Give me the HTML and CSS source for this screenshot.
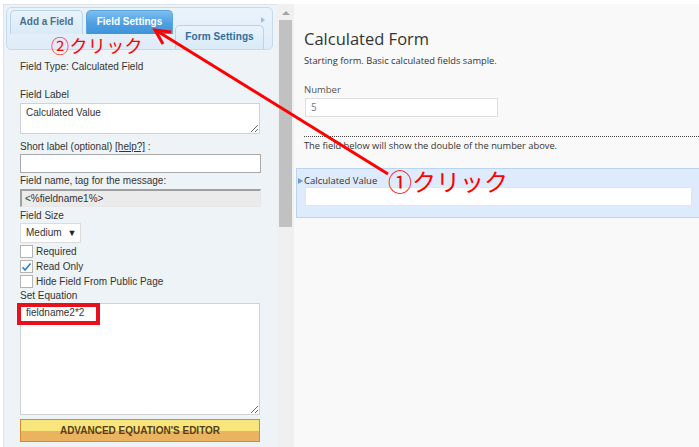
FILE: index.html
```html
<!doctype html>
<html lang="ja">
<head>
	<meta charset="UTF-8">
	<title>Calculated Form</title>
	<link rel="stylesheet" href="styles.css">
</head>
<body>
	<div class="app">
		<div class="sidebar">
			<div class="tabs">
				<span class="tab tab-first">Add a Field</span>
				<span class="tab tab-active">Field Settings</span>
				<span class="tab tab-low">Form Settings</span>
				<span class="tabs-more"></span>
			</div>
			<div class="settings">
				<div class="type">Field Type: Calculated Field</div>
				<div class="lbl">Field Label</div>
				<textarea class="area area-label">Calculated Value</textarea>
				<div class="lbl lbl-short">Short label (optional) <u>[help?]</u> :</div>
				<div class="text"></div>
				<div class="lbl lbl-name">Field name, tag for the message:</div>
				<div class="text text-ro">&lt;%fieldname1%&gt;</div>
				<div class="lbl lbl-size">Field Size</div>
				<div class="select">Medium <span class="caret">&#9660;</span></div>
				<div class="checks">
					<div class="check"><span class="box"></span>Required</div>
					<div class="check"><span class="box"><svg width="11" height="10" viewBox="0 0 11 10"><path d="M1.5 5.2 L4 8 L9.5 1.5" fill="none" stroke="#2f7bd6" stroke-width="1.6"/></svg></span>Read Only</div>
					<div class="check"><span class="box"></span>Hide Field From Public Page</div>
				</div>
				<div class="lbl">Set Equation</div>
				<textarea class="area area-eq">fieldname2*2</textarea>
				<div class="btn-editor">ADVANCED EQUATION'S EDITOR</div>
			</div>
		</div>
		<div class="scroll">
			<div class="scroll-up"></div>
			<div class="scroll-thumb"></div>
		</div>
		<div class="canvas">
			<div class="head">
				<h1 class="form-title">Calculated Form</h1>
				<p class="form-desc">Starting form. Basic calculated fields sample.</p>
				<div class="f-label">Number</div>
				<div class="f-input">5</div>
			</div>
			<div class="sep">The field below will show the double of the number above.</div>
			<div class="calc">
				<div class="calc-label">Calculated Value</div>
				<div class="f-input f-input-wide"></div>
			</div>
		</div>

		<div class="notes">
			<svg class="arrow" width="699" height="447" viewBox="0 0 699 447">
				<line x1="388" y1="174" x2="157" y2="31" stroke="#ff0000" stroke-width="3"/>
				<polyline points="171,32 155,30 163,44" fill="none" stroke="#ff0000" stroke-width="3" stroke-linejoin="miter"/>
			</svg>
			<span class="note note-2">②クリック</span>
			<span class="note note-1">①クリック</span>
			<span class="mark"></span>
		</div>
	</div>
</body>
</html>
```

FILE: styles.css
```css
*{
	margin: 0;
	padding: 0;
	box-sizing: border-box;
}
body{
	background: #fff;
}
.app{
	position: relative;
	display: flex;
	width: 699px;
	height: 447px;
	padding: 4px 0 0 3px;
	overflow: hidden;
}

/* left panel */
.sidebar{
	width: 274px;
	background: #eef3f7;
	border-top: 1px solid #dde4eb;
	border-left: 1px solid #dde4eb;
}
.tabs{
	position: relative;
	display: flex;
	align-items: flex-start;
	width: 267px;
	height: 43px;
	margin: 2px 0 0 2px;
	padding: 2px 0 0 3px;
	border: 1px solid #c5dbec;
	border-radius: 5px;
	background: linear-gradient(#eaf3fb, #dfecf8);
	font: bold 10px/22px "Liberation Sans", Arial, sans-serif;
}
.tab{
	height: 24px;
	border: 1px solid #b8d3ea;
	border-bottom: none;
	border-radius: 5px 5px 0 0;
	background: linear-gradient(#e9f3fc, #d9eaf8);
	color: #4d6f8b;
	text-align: center;
	white-space: nowrap;
}
.tab-first{
	width: 73px;
}
.tab-active{
	width: 87px;
	margin-left: 3px;
	border-color: #5aa4e0;
	background: linear-gradient(#7cbef0, #4d9fe0 55%, #3f95da);
	color: #fff;
}
.tab-low{
	width: 89px;
	margin: 15px 0 0 2px;
	color: #2e6e9e;
	letter-spacing: 0.1px;
}
.tabs-more{
	position: absolute;
	top: 9px;
	right: 7px;
	border-left: 4px solid #9dbfdf;
	border-top: 3px solid transparent;
	border-bottom: 3px solid transparent;
}
.settings{
	padding: 11px 16px 0 16px;
	font: 10px/12px "Liberation Sans", Arial, sans-serif;
	color: #333;
}
.type{
	margin-bottom: 16px;
}
.lbl{
	margin-bottom: 2px;
}
.lbl-short{
	margin-bottom: 1px;
}
.lbl-size{
	margin-bottom: 1px;
}
.lbl u{
	text-decoration: underline;
}
.area{
	display: block;
	width: 240px;
	padding: 3px 5px;
	border: 1px solid #cfd3d6;
	background: #fff;
	font: 10px/12px "Liberation Sans", Arial, sans-serif;
	color: #333;
	resize: vertical;
	outline: none;
}
.area-label{
	height: 31px;
	margin-bottom: 7px;
}
.area-eq{
	height: 112px;
	margin-top: -1px;
	margin-bottom: 4px;
}
.text{
	width: 241px;
	height: 19px;
	margin-bottom: 2px;
	border: 1px solid #a9a9a9;
	background: #fff;
}
.text-ro{
	height: 18px;
	margin-bottom: 3px;
	padding-left: 3px;
	border-top: 2px solid #a0a0a0;
	border-left: 2px solid #a0a0a0;
	border-right: 1px solid #e6e6e6;
	border-bottom: 1px solid #e6e6e6;
	background: #ebebeb;
	line-height: 15px;
}
.select{
	display: flex;
	align-items: center;
	width: 61px;
	height: 20px;
	padding-left: 5px;
	border: 1px solid #dcdcdc;
	background: #fff;
}
.caret{
	margin-left: 6px;
	font-size: 9px;
	color: #222;
}
.checks{
	padding-top: 1px;
	margin-bottom: 1px;
}
.check{
	display: flex;
	align-items: center;
	height: 15px;
	gap: 3px;
}
.box{
	display: flex;
	align-items: center;
	justify-content: center;
	width: 13px;
	height: 13px;
	border: 1px solid #b4b4b4;
	background: #fff;
}
.btn-editor{
	width: 240px;
	height: 23px;
	border: 1px solid #d58a2c;
	background: linear-gradient(#f8e67c 50%, #e9b35f 50%);
	color: #5a3a17;
	font-weight: bold;
	line-height: 21px;
	text-align: center;
}

/* scrollbar */
.scroll{
	width: 17px;
	padding-top: 7px;
	background: #f0f0f0;
}
.scroll-up{
	width: 0;
	margin: 0 auto;
	border-bottom: 4px solid #a3a3a3;
	border-left: 4px solid transparent;
	border-right: 4px solid transparent;
}
.scroll-thumb{
	width: 13px;
	height: 207px;
	margin: 5px 0 0 2px;
	background: #c1c1c1;
}

/* form preview */
.canvas{
	flex: 1;
	padding: 23px 0 0 2px;
	background: #f9f9f9;
	font-family: "Open Sans", "Noto Sans", sans-serif;
	color: #333;
}
.head{
	padding-left: 8px;
}
.form-title{
	font-size: 16.5px;
	font-weight: normal;
	line-height: 24px;
	margin-bottom: 3px;
}
.form-desc{
	font-size: 9.3px;
	line-height: 14px;
	margin-bottom: 15px;
}
.f-label{
	font-size: 9.5px;
	line-height: 14px;
	color: #555;
	margin-bottom: 1px;
}
.f-input{
	width: 193px;
	height: 19px;
	margin-left: 1px;
	padding-left: 5px;
	border: 1px solid #dedede;
	background: #fff;
	font-size: 10px;
	line-height: 17px;
	color: #777;
}
.sep{
	margin: 19px 0 0 8px;
	padding-top: 2px;
	border-top: 1px dotted #444;
	font-size: 9.3px;
	line-height: 14px;
}
.calc{
	margin-top: 15px;
	padding: 6px 0 11px 7px;
	border: 1px solid #b9d4ef;
	border-right: none;
	background: #ddebfc;
}
.calc-label{
	font-size: 9.5px;
	line-height: 12px;
}
.calc-label::before{
	content: "";
	display: inline-block;
	margin: 0 1px 0 -6px;
	border-left: 5px solid #6d9ccf;
	border-top: 3px solid transparent;
	border-bottom: 3px solid transparent;
}
.f-input-wide{
	width: 387px;
	border-color: #e2e6ea;
}

/* annotations */
.notes{
	position: absolute;
	top: 0;
	left: 0;
	width: 699px;
	height: 447px;
	pointer-events: none;
}
.arrow{
	position: absolute;
	top: 0;
	left: 0;
}
.note{
	position: absolute;
	color: #ff0000;
	font-family: "Noto Sans CJK JP", sans-serif;
	white-space: nowrap;
}
.note-2{
	top: 34px;
	left: 51px;
	font-size: 18px;
	line-height: 22px;
	letter-spacing: 0.4px;
}
.note-1{
	top: 167px;
	left: 388px;
	font-size: 24px;
	line-height: 28px;
}
.mark{
	position: absolute;
	top: 303px;
	left: 17px;
	width: 83px;
	height: 22px;
	border: 4px solid #e8101a;
}
```
